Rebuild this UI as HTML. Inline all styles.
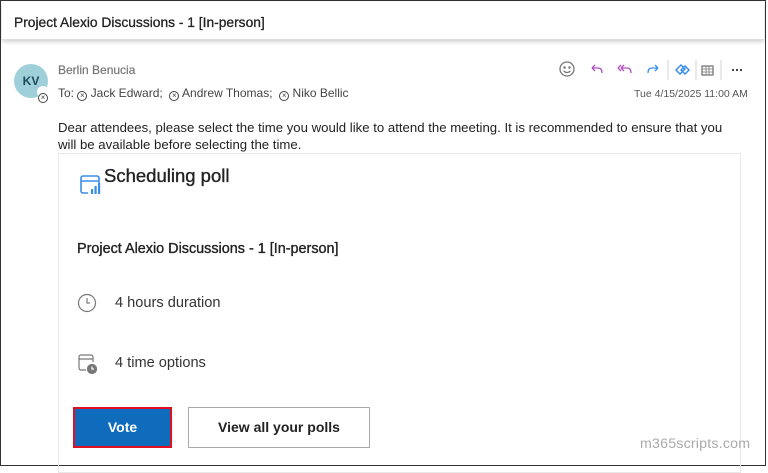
<!DOCTYPE html>
<html><head><meta charset="utf-8"><style>
*{margin:0;padding:0;box-sizing:border-box}
body{width:768px;height:468px;overflow:hidden;background:#fff;font-family:"Liberation Sans",sans-serif;position:relative}
.frame{position:absolute;left:0;top:0;width:766px;height:466px;border:1.5px solid #333;border-top:1px solid #333}
.hdr{position:absolute;left:2px;top:2px;width:762px;height:38px;background:#fff;box-shadow:0 2px 4px rgba(0,0,0,.18);border-bottom:1px solid #ddd}
.hdr span{position:absolute;left:12px;top:13px;font-size:13.8px;color:#222;-webkit-text-stroke:.3px #222}
.t{position:absolute;white-space:nowrap}
.av{position:absolute;left:14px;top:64px;width:34px;height:34px;border-radius:50%;background:#9fd0da;color:#1c4a5a;font-size:12px;font-weight:bold;text-align:center;line-height:34px}
.x{display:inline-block;width:10px;height:10px;border:1.2px solid #444;border-radius:50%;font-size:8px;line-height:7px;text-align:center;color:#444;vertical-align:-1px}
.card{position:absolute;left:58px;top:153px;width:683px;height:320px;border:1px solid #e8e8e8}
.vote{position:absolute;left:73px;top:407px;width:99px;height:41px;border:2px solid #e01020;background:#0f6cbd;color:#fff;font-size:14px;font-weight:bold;text-align:center;line-height:37px}
.view{position:absolute;left:188px;top:407px;width:182px;height:41px;border:1px solid #aaa;color:#222;font-size:14px;font-weight:bold;text-align:center;line-height:39px}
</style></head><body>
<div class="frame"></div>
<div class="hdr"><span>Project Alexio Discussions - 1 [In-person]</span></div>
<div class="av">KV</div>
<div class="t" style="left:37px;top:86px;width:12px;height:12px;border-radius:50%;background:#fff"><span class="x" style="margin:1px">×</span></div>
<div class="t" style="left:58px;top:63px;font-size:12px;color:#777;-webkit-text-stroke:.2px #777">Berlin Benucia</div>
<div class="t" style="left:58px;top:86px;font-size:12px;color:#444">To: <span class="x">×</span> Jack Edward;&nbsp; <span class="x">×</span> Andrew Thomas;&nbsp; <span class="x">×</span> Niko Bellic</div>
<svg class="t" style="left:556px;top:58px" width="200" height="26" viewBox="0 0 200 26" fill="none" stroke-width="1.3">
<circle cx="11" cy="11" r="7" stroke="#777"/><circle cx="8.5" cy="9.5" r=".6" fill="#777" stroke="#777"/><circle cx="13.5" cy="9.5" r=".6" fill="#777" stroke="#777"/><path d="M7.5 13q3.5 3 7 0" stroke="#777"/>
<path d="M36 10h6q4 0 4 5M36 10l3-3M36 10l3 3" stroke="#b04fc0"/>
<path d="M65 10h6q4 0 4 5M65 10l3-3M65 10l3 3M62 10l3-3M62 10l3 3" stroke="#b04fc0"/>
<path d="M102 10h-6q-4 0-4 5M102 10l-3-3M102 10l-3 3" stroke="#3a8ee6"/>
<line x1="112" y1="2" x2="112" y2="22" stroke="#ddd"/>
<path d="M120 12l5-5 4 4-5 5zM125 12l4-4 4 4-4 4z" stroke="#3a8ee6" stroke-width="1.5"/>
<line x1="140" y1="2" x2="140" y2="22" stroke="#ddd"/>
<rect x="146" y="8" width="11" height="9" stroke="#777"/><path d="M146 11h11M146 14h11M150 8v9M153 8v9" stroke="#777" stroke-width=".8"/>
<line x1="165" y1="2" x2="165" y2="22" stroke="#ddd"/>
<circle cx="177" cy="12" r="1.1" fill="#333"/><circle cx="181" cy="12" r="1.1" fill="#333"/><circle cx="185" cy="12" r="1.1" fill="#333"/>
</svg>
<div class="t" style="left:634px;top:88px;font-size:10.5px;color:#555">Tue 4/15/2025 11:00 AM</div>
<div class="t" style="left:58px;top:120px;font-size:13.2px;color:#222;line-height:16.5px">Dear attendees, please select the time you would like to attend the meeting. It is recommended to ensure that you<br>will be available before selecting the time.</div>
<div class="card"></div>
<svg class="t" style="left:78px;top:173px" width="26" height="26" viewBox="0 0 26 26" fill="none">
<path d="M10 20H5a2 2 0 0 1-2-2V5a2 2 0 0 1 2-2h14a2 2 0 0 1 2 2v5M3 8h18" stroke="#3a8ee6" stroke-width="1.6"/>
<rect x="13" y="16" width="2.2" height="5" fill="#3a8ee6"/><rect x="16.5" y="13" width="2.2" height="8" fill="#3a8ee6"/><rect x="20" y="10" width="2.2" height="11" fill="#3a8ee6"/>
</svg>
<div class="t" style="left:104px;top:165px;font-size:18.5px;color:#222;-webkit-text-stroke:.35px #222">Scheduling poll</div>
<div class="t" style="left:77px;top:241px;font-size:14.4px;color:#222;-webkit-text-stroke:.35px #222">Project Alexio Discussions - 1 [In-person]</div>
<svg class="t" style="left:77px;top:293px" width="20" height="20" viewBox="0 0 20 20" fill="none" stroke="#777" stroke-width="1.2"><circle cx="10" cy="10" r="8.5"/><path d="M10 5v5h3"/></svg>
<div class="t" style="left:115px;top:295px;font-size:14.6px;color:#333">4 hours duration</div>
<svg class="t" style="left:77px;top:353px" width="22" height="22" viewBox="0 0 22 22" fill="none" stroke="#777" stroke-width="1.2"><path d="M9 17H4a2 2 0 0 1-2-2V4a2 2 0 0 1 2-2h10a2 2 0 0 1 2 2v5M2 6h14"/><circle cx="15" cy="16" r="4.5" fill="#777"/><path d="M15 13.5v2.5h2" stroke="#fff"/></svg>
<div class="t" style="left:115px;top:355px;font-size:14.6px;color:#333">4 time options</div>
<div class="vote">Vote</div>
<div class="view">View all your polls</div>
<div class="t" style="left:640px;top:436px;font-size:14.2px;color:#aaa;letter-spacing:.2px">m365scripts.com</div>
</body></html>
